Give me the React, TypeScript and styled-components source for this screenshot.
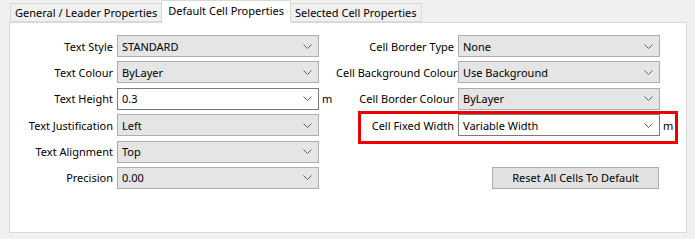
import styled, { createGlobalStyle } from "styled-components";

const GlobalStyle = createGlobalStyle`
  html, body {
    margin: 0;
    padding: 0;
    background: #f0f0f0;
  }
  body {
    font-family: "Noto Sans", "Open Sans", sans-serif;
    font-size: 11px;
    color: #000;
  }
`;

const Window = styled.div`
  width: 695px;
  height: 239px;
  box-sizing: border-box;
  padding: 0 8px 0 9px;
  background: #f0f0f0;
`;

const TabStrip = styled.div`
  display: flex;
  align-items: flex-end;
  height: 22px;
  padding-left: 1px;
`;

const Tab = styled.div<{ $active?: boolean }>`
  box-sizing: border-box;
  height: ${(p) => (p.$active ? "23px" : "19px")};
  padding: 0 ${(p) => (p.$active ? "6px" : "4px")};
  margin: 0 ${(p) => (p.$active ? "-1px" : "0")};
  display: flex;
  align-items: center;
  background: ${(p) => (p.$active ? "#fff" : "#f0f0f0")};
  border: 1px solid #d9d9d9;
  border-bottom: ${(p) => (p.$active ? "none" : "1px solid #d9d9d9")};
  position: relative;
  top: ${(p) => (p.$active ? "1px" : "0")};
  z-index: ${(p) => (p.$active ? 1 : 0)};
  white-space: nowrap;
  padding-bottom: ${(p) => (p.$active ? "3px" : "0")};
`;

const Panel = styled.div`
  box-sizing: border-box;
  height: 211px;
  background: #fff;
  border: 1px solid #d9d9d9;
  padding: 12px 0 0 0;
  display: flex;
`;

const Column = styled.div<{ $label: number }>`
  display: flex;
  flex-direction: column;
  gap: 4.4px;
  --label: ${(p) => p.$label}px;
`;

const Row = styled.div<{ $highlight?: boolean }>`
  display: grid;
  grid-template-columns: var(--label) 202px 17px;
  align-items: center;
  height: 22px;
  position: relative;

  ${(p) =>
    p.$highlight &&
    `
    &::after {
      content: "";
      position: absolute;
      left: calc(var(--label) - 100px);
      right: -1px;
      top: -3px;
      bottom: -8px;
      border: 3px solid #ee0000;
      pointer-events: none;
    }
  `}
`;

const Label = styled.span`
  text-align: right;
  padding-right: 4px;
  white-space: nowrap;
`;

const Combo = styled.div<{ $editable?: boolean }>`
  box-sizing: border-box;
  height: 22px;
  display: flex;
  align-items: center;
  justify-content: space-between;
  padding: 0 6px 0 4px;
  background: ${(p) => (p.$editable ? "#fff" : "#e5e5e5")};
  border: 1px solid ${(p) => (p.$editable ? "#7a7a7a" : "#adadad")};
`;

const Unit = styled.span`
  padding-left: 3px;
`;

const Button = styled.div`
  grid-column: 2;
  justify-self: end;
  box-sizing: border-box;
  width: 167px;
  height: 22px;
  margin-right: 1px;
  display: flex;
  align-items: center;
  justify-content: center;
  background: #e1e1e1;
  border: 1px solid #adadad;
`;

const Chevron = () => (
  <svg width="9" height="5" viewBox="0 0 9 5">
    <polyline points="0.5,0.5 4.5,4.5 8.5,0.5" fill="none" stroke="#606060" strokeWidth="1" />
  </svg>
);

interface Field {
  label: string;
  value: string;
  editable?: boolean;
  unit?: string;
  highlight?: boolean;
}

const left: Field[] = [
  { label: "Text Style", value: "STANDARD" },
  { label: "Text Colour", value: "ByLayer" },
  { label: "Text Height", value: "0.3", editable: true, unit: "m" },
  { label: "Text Justification", value: "Left" },
  { label: "Text Alignment", value: "Top" },
  { label: "Precision", value: "0.00" },
];

const right: Field[] = [
  { label: "Cell Border Type", value: "None" },
  { label: "Cell Background Colour", value: "Use Background" },
  { label: "Cell Border Colour", value: "ByLayer" },
  { label: "Cell Fixed Width", value: "Variable Width", editable: true, unit: "m", highlight: true },
];

function FieldRow({ f }: { f: Field }) {
  return (
    <Row $highlight={f.highlight}>
      <Label>{f.label}</Label>
      <Combo $editable={f.editable}>
        <span>{f.value}</span>
        <Chevron />
      </Combo>
      <Unit>{f.unit}</Unit>
    </Row>
  );
}

export default function App() {
  return (
    <Window>
      <GlobalStyle />
      <TabStrip>
        <Tab>General / Leader Properties</Tab>
        <Tab $active>Default Cell Properties</Tab>
        <Tab>Selected Cell Properties</Tab>
      </TabStrip>
      <Panel>
        <Column $label={107}>
          {left.map((f) => (
            <FieldRow key={f.label} f={f} />
          ))}
        </Column>
        <Column $label={122}>
          {right.map((f) => (
            <FieldRow key={f.label} f={f} />
          ))}
          <Row />
          <Row>
            <span />
            <Button>Reset All Cells To Default</Button>
          </Row>
        </Column>
      </Panel>
    </Window>
  );
}
